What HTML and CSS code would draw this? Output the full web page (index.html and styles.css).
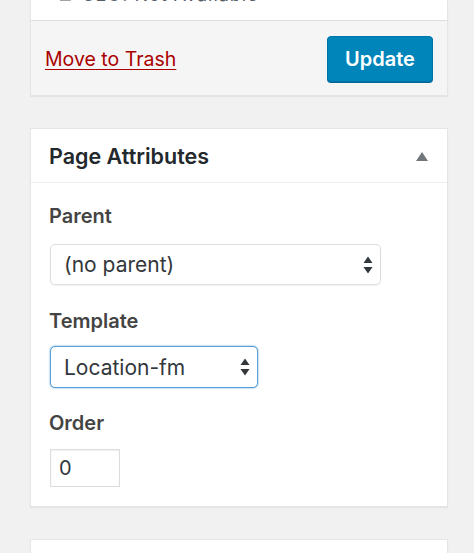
FILE: index.html
```html
<!DOCTYPE html>
<html lang="en">
<head>
<meta charset="utf-8">
<title>Page Attributes</title>
<link rel="stylesheet" href="styles.css">
</head>
<body>
<div class="column">
  <div class="postbox publish">
    <div class="misc">
      <div class="misc-row">
        <svg class="misc-icon" width="26" height="26" viewBox="0 0 26 26"><circle cx="9" cy="11" r="7" fill="none" stroke="#82878c" stroke-width="2"/><path d="M14 6h10v13H14" fill="none" stroke="#82878c" stroke-width="1.6"/></svg>
        <span class="misc-text">SEO: Not Available</span>
      </div>
    </div>
    <div class="actions">
      <a class="trash" href="#">Move to Trash</a>
      <button class="button-primary" type="button">Update</button>
    </div>
  </div>

  <div class="postbox">
    <div class="hndle">
      <h2 class="title">Page Attributes</h2>
      <svg class="toggle" width="12" height="9" viewBox="0 0 12 9"><path d="M6 0L12 9H0z" fill="#72777c"/></svg>
    </div>
    <div class="inside">
      <p class="label">Parent</p>
      <div class="select-wrap wide">
        <select class="select"><option>(no parent)</option></select>
        <svg class="arrows" width="10" height="17" viewBox="0 0 10 17"><path d="M5 0L9.5 6.5H0.5z M0.5 10.5H9.5L5 17z" fill="#32373c"/></svg>
      </div>
      <p class="label">Template</p>
      <div class="select-wrap narrow">
        <select class="select focus"><option>Location-fm</option></select>
        <svg class="arrows" width="10" height="17" viewBox="0 0 10 17"><path d="M5 0L9.5 6.5H0.5z M0.5 10.5H9.5L5 17z" fill="#32373c"/></svg>
      </div>
      <p class="label">Order</p>
      <input class="order" type="text" value="0">
    </div>
  </div>

  <div class="postbox next"></div>
</div>
</body>
</html>
```

FILE: styles.css
```css
html, body {
  margin: 0;
  padding: 0;
  background: #f1f1f1;
  font-family: "Inter", "Liberation Sans", sans-serif;
  color: #32373c;
  height: 553px;
  overflow: hidden;
}

.column {
  width: 418px;
  margin-left: 30px;
  display: flex;
  flex-direction: column;
  gap: 32px;
}

.postbox {
  background: #fff;
  border: 1px solid #e5e5e5;
  box-shadow: 0 1px 1px rgba(0, 0, 0, 0.05);
  box-sizing: border-box;
}

.publish {
  border-top: none;
}

.misc {
  height: 20px;
  overflow: hidden;
  border-bottom: 1px solid #dddddd;
}

.misc-row {
  display: flex;
  align-items: center;
  gap: 11px;
  margin-top: -19px;
  padding-left: 15px;
  height: 26px;
}

.misc-text {
  font-size: 18px;
  color: #555d66;
  letter-spacing: 1px;
}

.actions {
  background: #f5f5f5;
  display: flex;
  justify-content: space-between;
  align-items: center;
  padding: 15px 14px 13px 14px;
}

.trash {
  color: #a00;
  font-size: 19.5px;
  text-decoration: underline;
  text-underline-offset: 3px;
  text-decoration-thickness: 1px;
}

.button-primary {
  width: 106px;
  height: 46px;
  background: #0085ba;
  border: 1px solid #0073aa;
  border-radius: 4px;
  box-shadow: 0 1px 0 #006799;
  color: #fff;
  font-family: inherit;
  font-size: 20px;
  font-weight: 600;
  padding: 0;
}

.hndle {
  height: 54px;
  border-bottom: 1px solid #eeeeee;
  display: flex;
  align-items: center;
  justify-content: space-between;
  padding: 0 19px 0 18px;
  box-sizing: border-box;
}

.title {
  margin: 0;
  font-size: 21.5px;
  font-weight: 600;
  color: #23282d;
}

.toggle {
  margin-top: 2px;
}

.inside {
  padding: 21px 19px 19px 18px;
}

.label {
  margin: 0;
  font-size: 20px;
  font-weight: 600;
  line-height: 24px;
  color: #444;
}

.select-wrap {
  position: relative;
  margin: 16px 0 24px 1px;
}

.wide { width: 331px; }
.narrow { width: 208px; margin-top: 13px; margin-bottom: 23px; }

.select {
  appearance: none;
  -webkit-appearance: none;
  width: 100%;
  height: 41px;
  box-sizing: border-box;
  border: 1px solid #dddddd;
  border-radius: 5px;
  background: #fff;
  padding: 0 13px;
  font-family: inherit;
  font-size: 21px;
  color: #32373c;
  box-shadow: 0 1px 2px rgba(0, 0, 0, 0.05);
  display: block;
}

.select.focus {
  height: 42px;
  border-color: #5b9dd9;
  box-shadow: 0 0 2px rgba(30, 140, 190, 0.8);
}

.arrows {
  position: absolute;
  right: 8px;
  top: 50%;
  transform: translateY(-50%);
}

.order {
  display: block;
  margin: 14px 0 0 1px;
  width: 70px;
  height: 38px;
  box-sizing: border-box;
  border: 1px solid #dddddd;
  box-shadow: inset 0 1px 2px rgba(0, 0, 0, 0.07);
  padding: 0 8px;
  font-family: inherit;
  font-size: 20px;
  color: #32373c;
}

.next {
  height: 60px;
}
```
